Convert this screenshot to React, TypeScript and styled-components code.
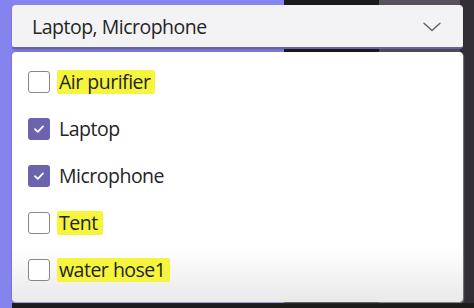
import React from "react";
import styled, { createGlobalStyle } from "styled-components";

const Global = createGlobalStyle`
  html, body { margin: 0; padding: 0; }
  body {
    width: 474px;
    height: 308px;
    overflow: hidden;
    font-family: "Open Sans", "Noto Sans", sans-serif;
    background-color: #2b2a2f;
    background-image:
      linear-gradient(to right, #8583ee 0 12px, transparent 12px),
      linear-gradient(to bottom, transparent 0 303px, #1c1c1a 303px),
      linear-gradient(to right, #8785ef 0 60%, #1b1b1e 60% 80%, #57525d 80% 97%, #323035 97%);
  }
`;

const Page = styled.div`
  display: flex;
  flex-direction: column;
  gap: 3px;
  padding: 5px 11px 0 12px;
`;

const Trigger = styled.div`
  height: 44px;
  box-sizing: border-box;
  display: flex;
  align-items: center;
  justify-content: space-between;
  padding: 0 22px 0 20px;
  background: #f3f3f5;
  border-radius: 4px 4px 3px 3px;
  border-bottom: 2px solid #65669f;
  box-shadow: 0 1px 2px rgba(0, 0, 0, 0.25);
  color: #252424;
  font-size: 19.5px;
  letter-spacing: -0.5px;
`;

const Chevron = styled.svg`
  width: 18px;
  height: 10px;
  margin-top: 2px;
`;

const List = styled.div`
  display: flex;
  flex-direction: column;
  padding: 6px 0 8px 16px;
  height: 250px;
  box-sizing: border-box;
  border-radius: 4px;
  background: linear-gradient(to bottom, #ffffff 0, #ffffff 78%, #e9e9e9 100%);
  box-shadow: 0 0 2px rgba(0, 0, 0, 0.35), 1px 1px 1px rgba(255, 255, 255, 0.4);
`;

const Row = styled.div`
  height: 47px;
  display: flex;
  align-items: center;
  gap: 8px;
  color: #252424;
  font-size: 19.5px;
  letter-spacing: -0.5px;
`;

const Box = styled.div<{ $checked: boolean }>`
  width: 22px;
  height: 22px;
  box-sizing: border-box;
  border-radius: 3px;
  display: flex;
  align-items: center;
  justify-content: center;
  background: ${(p) => (p.$checked ? "#6b63ad" : "#ffffff")};
  border: ${(p) => (p.$checked ? "none" : "1.5px solid #8a8886")};
`;

const Label = styled.span<{ $marked: boolean }>`
  padding: 0 5px 0 2px;
  margin-left: -1px;
  line-height: 24px;
  background: ${(p) => (p.$marked ? "#f4f53c" : "transparent")};
  border-radius: 2px;
`;

const items = [
  { label: "Air purifier", checked: false, marked: true },
  { label: "Laptop", checked: true, marked: false },
  { label: "Microphone", checked: true, marked: false },
  { label: "Tent", checked: false, marked: true },
  { label: "water hose1", checked: false, marked: true },
];

export default function App() {
  return (
    <>
      <Global />
      <Page>
        <Trigger>
          <span>Laptop, Microphone</span>
          <Chevron viewBox="0 0 18 10">
            <path d="M1 1.2 L9 8.6 L17 1.2" fill="none" stroke="#616161" strokeWidth="1.4" strokeLinecap="round" strokeLinejoin="round" />
          </Chevron>
        </Trigger>
        <List>
          {items.map((it) => (
            <Row key={it.label}>
              <Box $checked={it.checked}>
                {it.checked && (
                  <svg width="12" height="10" viewBox="0 0 12 10">
                    <path d="M2 5.2 L4.8 7.8 L10 2.4" fill="none" stroke="#ffffff" strokeWidth="1.8" strokeLinecap="round" strokeLinejoin="round" />
                  </svg>
                )}
              </Box>
              <Label $marked={it.marked}>{it.label}</Label>
            </Row>
          ))}
        </List>
      </Page>
    </>
  );
}
